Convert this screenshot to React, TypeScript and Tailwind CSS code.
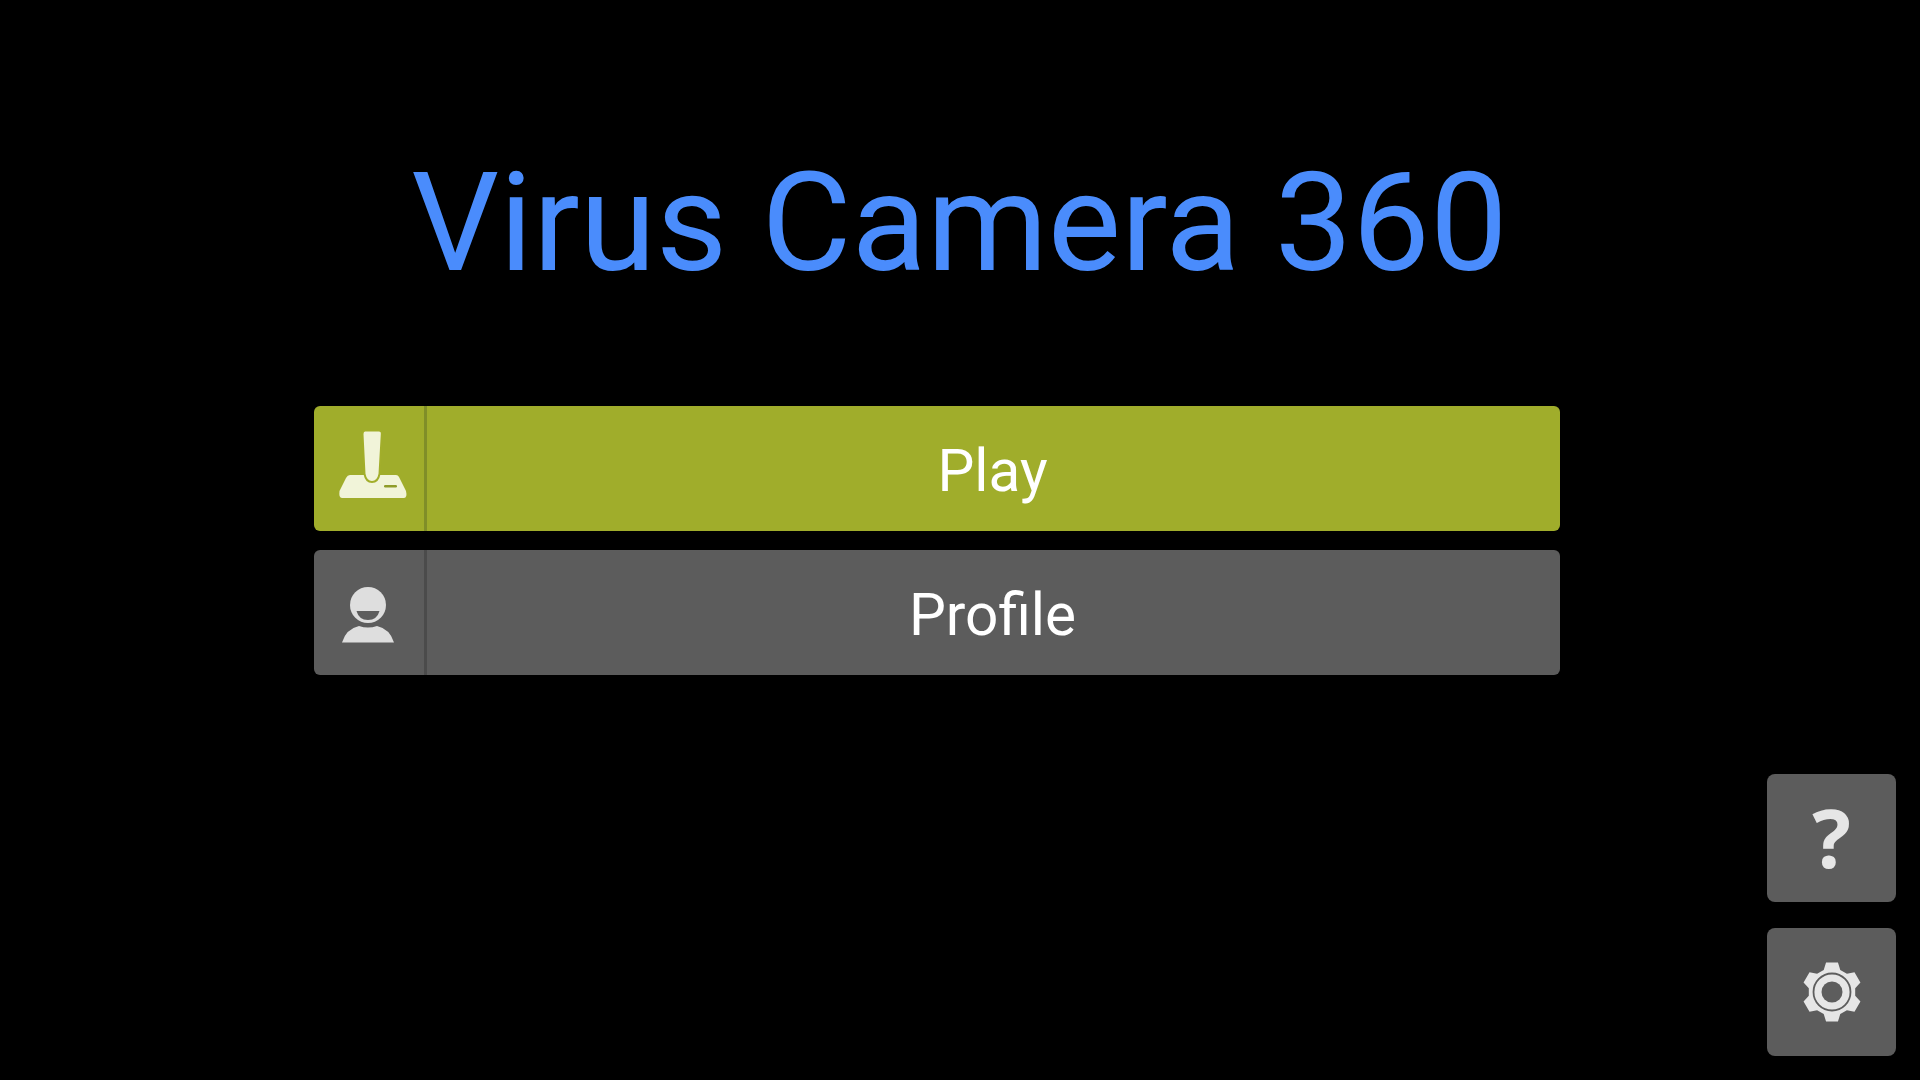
import React from "react";

const gearPath = () => {
  // six teeth, one straight up
  const pts: string[] = [];
  for (let i = 0; i < 6; i++) {
    const a = (i * 60 - 90) * (Math.PI / 180);
    const at = (r: number, d: number) => {
      const x = 32 + r * Math.cos(a + d);
      const y = 32 + r * Math.sin(a + d);
      return `${x.toFixed(2)} ${y.toFixed(2)}`;
    };
    pts.push(at(23.5, -0.36), at(30, -0.2), at(30, 0.2), at(23.5, 0.36));
  }
  return "M" + pts.join(" L") + " Z";
};

const JoystickIcon = () => (
  <svg width="70" height="70" viewBox="0 -2 70 70" className="block">
    <path
      d="M12 43 H58 Q60 43 61 45 L68 59 Q69.500 66 66 66 H4 Q0.500 66 1.500 59 L8 46 Q9.500 43 12 43 Z"
      fill="#f1f4d9"
    />
    <path
      d="M27 -1.500 H41 Q44 -1.500 43.800 2 L41.500 42 Q40 50 34 50 Q28 50 26.500 42 L24.500 2 Q24.500 -1.500 27 -1.500 Z"
      fill="#f1f4d9"
      stroke="#a2ae2b"
      strokeWidth="2"
    />
    <rect x="46" y="53" width="13" height="2.500" rx="1.200" fill="#8f9c2a" />
  </svg>
);

const PersonIcon = () => (
  <svg width="54" height="56" viewBox="0 0 54 56" className="block">
    <circle cx="27" cy="18" r="18" fill="#dedede" />
    <path d="M15.500 24 H38.500 Q36 33 27 33 Q18 33 15.500 24 Z" fill="#5d5d5d" />
    <path
      d="M18 39 Q27 42 36 39 Q49 42 53 55.500 H1 Q5 42 18 39 Z"
      fill="#dedede"
    />
  </svg>
);

const GearIcon = () => (
  <svg width="64" height="64" viewBox="0 0 64 64" className="block">
    <path d={gearPath()} fill="#e6e6e6" strokeLinejoin="round" />
    <circle cx="32" cy="32" r="18.500" fill="none" stroke="#5d5d5d" strokeWidth="1.800" />
    <circle cx="32" cy="32" r="10.500" fill="#5d5d5d" />
  </svg>
);

type MenuButtonProps = {
  label: string;
  icon: React.ReactNode;
  className: string;
  dividerClassName: string;
  iconClassName: string;
};

const MenuButton: React.FC<MenuButtonProps> = ({ label, icon, className, dividerClassName, iconClassName }) => (
  <button className={`flex h-[125px] w-full items-stretch rounded-md ${className}`}>
    <span className={`flex w-[113px] items-center justify-center border-r-[3px] ${dividerClassName} ${iconClassName}`}>
      {icon}
    </span>
    <span className="flex flex-1 items-center justify-center pr-[2px] pt-[6px] text-[58.500px] text-white">{label}</span>
  </button>
);

const App: React.FC = () => {
  return (
    <div className="flex h-screen w-full flex-col overflow-hidden bg-black font-['Roboto',sans-serif]">
      <h1 className="mt-[142px] pr-[1px] text-center text-[138.200px] leading-[162px] text-[#4a8cfc]">
        Virus Camera 360
      </h1>

      <div className="ml-[314px] mt-[102px] flex w-[1246px] flex-col gap-[19px]">
        <MenuButton
          label="Play"
          icon={<JoystickIcon />}
          className="bg-[#a0ad2b]"
          dividerClassName="border-[#808e28]"
          iconClassName="pb-[8px] pl-[7px]"
        />
        <MenuButton
          label="Profile"
          icon={<PersonIcon />}
          className="bg-[#5c5c5c]"
          dividerClassName="border-[#4b4b4b]"
          iconClassName="pt-[4px] pr-[2px]"
        />
      </div>

      <div className="mb-6 mr-6 mt-auto flex flex-col gap-[26px] self-end">
        <button className="flex h-[128px] w-[129px] items-center justify-center rounded-lg bg-[#5c5c5c] pb-[4px] font-['Open_Sans',sans-serif] text-[81px] font-bold leading-none text-[#e6e6e6]">
          ?
        </button>
        <button className="flex h-[128px] w-[129px] items-center justify-center rounded-lg bg-[#5c5c5c]">
          <GearIcon />
        </button>
      </div>
    </div>
  );
};

export default App;
